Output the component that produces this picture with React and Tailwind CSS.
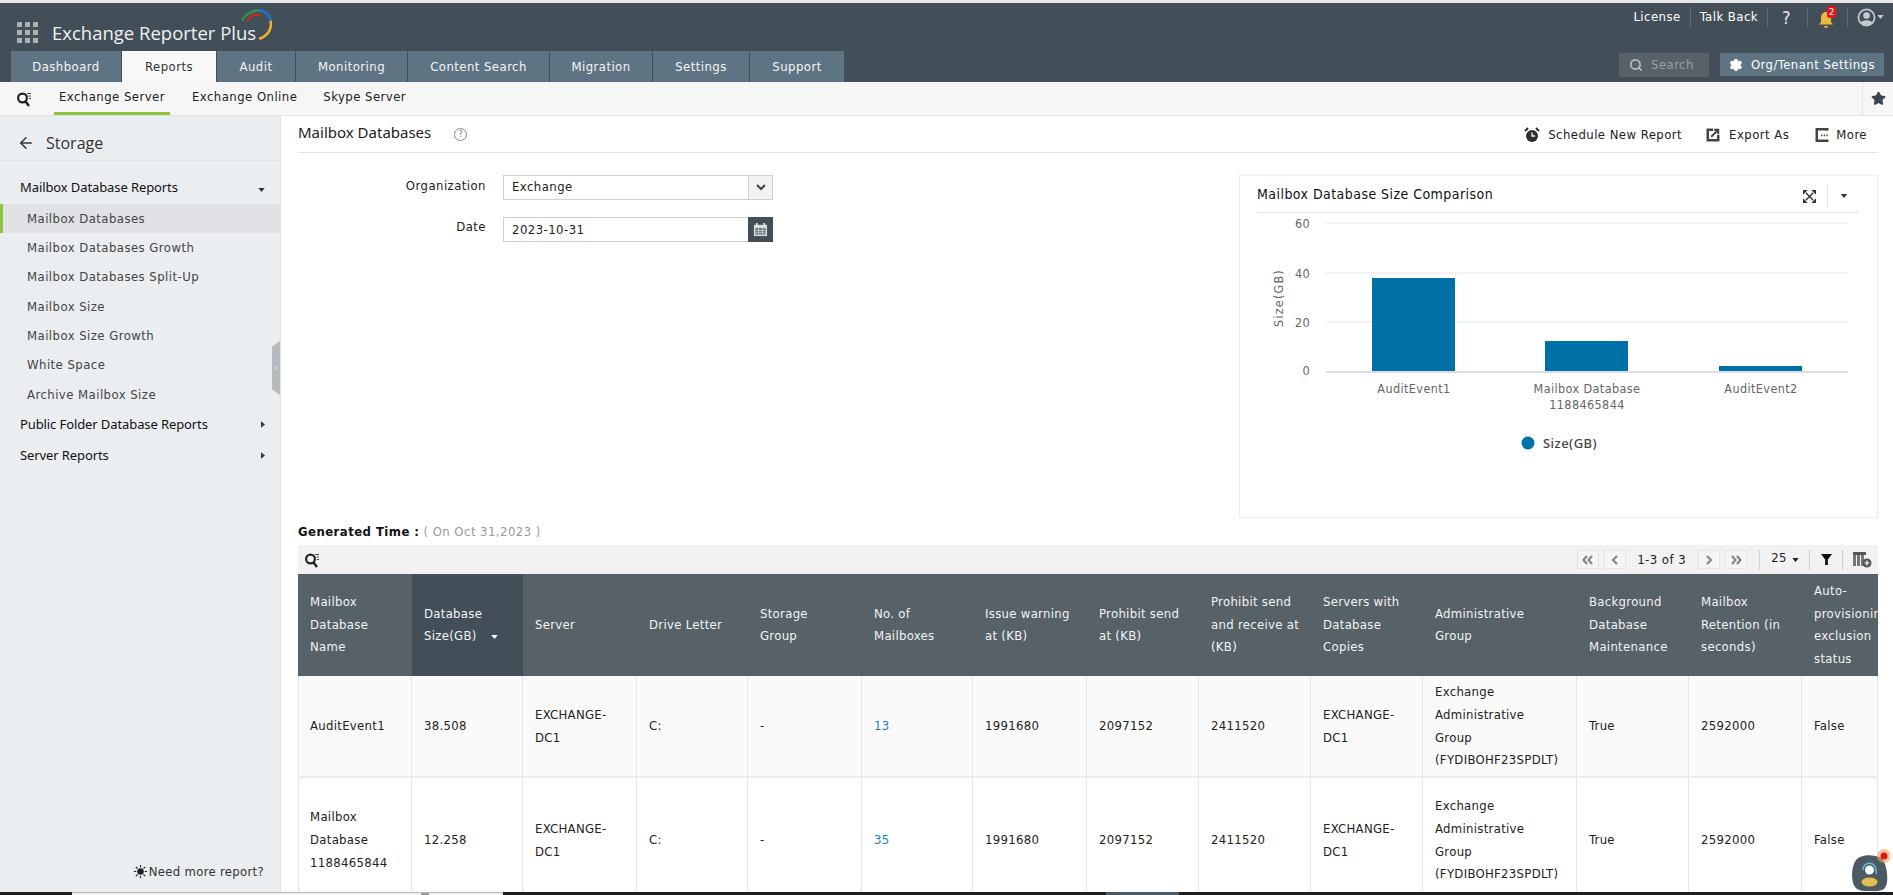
import React from "react";
import { Search, Star, ArrowLeft, Settings } from "lucide-react";

const tabs = [
  ["Dashboard", "w-[111px]"],
  ["Reports", "w-[95px]"],
  ["Audit", "w-[79px]"],
  ["Monitoring", "w-[112px]"],
  ["Content Search", "w-[142px]"],
  ["Migration", "w-[103px]"],
  ["Settings", "w-[97px]"],
  ["Support", "w-[95px]"],
];

const sideItems = ["Mailbox Databases", "Mailbox Databases Growth", "Mailbox Databases Split-Up", "Mailbox Size", "Mailbox Size Growth", "White Space", "Archive Mailbox Size"];

const cols = [
  ["Mailbox Database Name", "w-[114px]"],
  ["Database Size(GB)", "w-[111px]"],
  ["Server", "w-[114px]"],
  ["Drive Letter", "w-[111px]"],
  ["Storage Group", "w-[114px]"],
  ["No. of Mailboxes", "w-[111px]"],
  ["Issue warning at (KB)", "w-[114px]"],
  ["Prohibit send at (KB)", "w-[112px]"],
  ["Prohibit send and receive at (KB)", "w-[112px]"],
  ["Servers with Database Copies", "w-[112px]"],
  ["Administrative Group", "w-[154px]"],
  ["Background Database Maintenance", "w-[112px]"],
  ["Mailbox Retention (in seconds)", "w-[113px]"],
  ["Auto-provisioning exclusion status", "w-[76px]"],
];

const rows = [
  { name: "AuditEvent1", size: "38.508", mb: "13", h: "h-[102px]", bg: "bg-[#fafafa]" },
  { name: "Mailbox Database 1188465844", size: "12.258", mb: "35", h: "h-[126px]", bg: "bg-white" },
];

function FindIcon({ className }) {
  return (
    <svg viewBox="0 0 16 16" className={className} fill="none">
      <circle cx="6.5" cy="7" r="4.4" stroke="#222" strokeWidth="2.2" />
      <path d="M9.5 10.5L13 15" stroke="#222" strokeWidth="2.4" />
      <path d="M11 2.5h4M12.5 5h2.5M13 7.5h2" stroke="#444" strokeWidth="1" />
    </svg>
  );
}

function Logo() {
  return (
    <svg viewBox="0 0 34 32" className="w-[38px] h-[34px] -ml-[17px] -mt-[18px]" fill="none">
      <path d="M2 13C6 5 14 2 20 4" stroke="#2f8f4e" strokeWidth="2.4" />
      <path d="M6 14C9 8 15 6 20 8" stroke="#c8282d" strokeWidth="2" />
      <path d="M18 3C25 4 29 9 29 15" stroke="#1c75bc" strokeWidth="2.6" />
      <path d="M29 13C30 21 26 27 18 30" stroke="#f0b429" strokeWidth="2.4" />
    </svg>
  );
}

function Grid9() {
  return (
    <div className="grid grid-cols-3 gap-[3px] w-[21px] h-[21px]">
      {Array.from({ length: 9 }).map((_, i) => (
        <div key={i} className="bg-[#aab0b4] w-[5px] h-[5px]" />
      ))}
    </div>
  );
}

function PagerBtn({ children }) {
  return (
    <div className="w-[22px] h-[19px] border border-[#e4e4e4] bg-[#f5f5f5] flex items-center justify-center">
      <svg viewBox="0 0 12 10" className="w-[12px] h-[10px]" fill="none" stroke="#888" strokeWidth="2.2">
        {children}
      </svg>
    </div>
  );
}

function Chart() {
  return (
    <svg viewBox="1240 213 636 304" className="w-[636px] h-[304px] block">
      <style>{`.ax{font-family:'DejaVu Sans';font-stretch:condensed;font-size:12.5px;fill:#666;letter-spacing:.4px}`}</style>
      {[[223, "60"], [273, "40"], [322, "20"]].map(([y, t]) => (
        <g key={t}>
          <line x1="1326" x2="1848" y1={y} y2={y} stroke="#e6e6e6" />
          <text x="1310" y={y + 5} textAnchor="end" className="ax">{t}</text>
        </g>
      ))}
      <text x="1310" y="375" textAnchor="end" className="ax">0</text>
      <text transform="translate(1283 298) rotate(-90)" textAnchor="middle" className="ax" style={{ letterSpacing: "1.2px" }}>Size(GB)</text>
      <rect x="1372" y="278" width="83" height="93" fill="#0071a7" />
      <rect x="1545" y="341" width="83" height="30" fill="#0071a7" />
      <rect x="1719" y="366" width="83" height="5" fill="#0071a7" />
      <rect x="1326" y="371" width="522" height="2" fill="#dcdfe3" />
      <text x="1414" y="393" textAnchor="middle" className="ax">AuditEvent1</text>
      <text x="1587" y="393" textAnchor="middle" className="ax">Mailbox Database</text>
      <text x="1587" y="409" textAnchor="middle" className="ax">1188465844</text>
      <text x="1761" y="393" textAnchor="middle" className="ax">AuditEvent2</text>
      <ellipse cx="1528" cy="443" rx="6.5" ry="6.5" fill="#0071a7" />
      <text x="1543" y="448" style={{ fontFamily: "'Noto Sans'", fontSize: 13, fontWeight: 500, fill: "#444" }}>Size(GB)</text>
    </svg>
  );
}

export default function App() {
  return (
    <div className="w-[1893px] h-[895px] overflow-hidden flex flex-col bg-white text-[13px] text-[#222] tracking-[0.45px] font-['DejaVu_Sans',sans-serif] [font-stretch:condensed] relative">
      <div className="h-[3px] bg-[#e6e6e6] shrink-0" />
      {/* header */}
      <div className="h-[79px] bg-[#434f58] shrink-0 flex justify-between">
        <div className="flex flex-col justify-between pl-[11px]">
          <div className="flex items-center pl-[6px] pt-[19px]">
            <Grid9 />
            <span className="ml-[14px] text-[18.500px] leading-[20px] tracking-normal text-[#f0f1f2] font-['Open_Sans',sans-serif] [font-stretch:normal]">Exchange Reporter Plus</span>
            <Logo />
          </div>
          <div className="flex h-[32px] -mb-[1px]">
            {tabs.map(([t, w], i) => (
              <div key={t} className={`${w} h-full flex items-center justify-center border-r border-[#434f58] ${i === 1 ? "bg-[#f8f8f8] text-[#333]" : "bg-[#5f7482] text-[#f4f5f6]"}`}>{t}</div>
            ))}
          </div>
        </div>
        <div className="flex flex-col justify-between pr-[9px] items-end">
          <div className="flex items-center h-[20px] mt-[4px] text-white">
            <span>License</span>
            <div className="w-px h-[20px] bg-[#5f6c75] ml-[9px] mr-[9px]" />
            <span>Talk Back</span>
            <div className="w-px h-[20px] bg-[#5f6c75] ml-[9px] mr-[14px]" />
            <span className="text-[18px] text-[#e4e6e8] w-[12px]">?</span>
            <div className="w-px h-[20px] bg-[#5f6c75] ml-[13px] mr-[10px]" />
            <div className="relative w-[18px] h-[20px]">
              <svg viewBox="0 0 16 18" className="w-[16px] h-[18px] mt-[4px]"><path d="M8 1c3 0 5 2.500 5 6v4l2 2.500H1L3 11V7c0-3.500 2-6 5-6z" fill="#eeb63c" /><path d="M6 15h4a2 2 0 0 1-4 0z" fill="#eeb63c" /></svg>
              <span className="absolute -top-[1px] left-[9px] w-[9px] h-[12px] rounded-[3px] bg-[#e8141c] text-white text-[9px] leading-[12px] text-center tracking-normal">2</span>
            </div>
            <div className="w-px h-[20px] bg-[#5f6c75] ml-[11px] mr-[9px]" />
            <svg viewBox="0 0 20 20" className="w-[19px] h-[19px]"><circle cx="10" cy="10" r="8.5" fill="none" stroke="#c5cacd" strokeWidth="1.800" /><circle cx="10" cy="8" r="3.500" fill="#c5cacd" /><path d="M4 16c1-4 11-4 12 0l-3 2.500H7z" fill="#c5cacd" /></svg>
            <svg viewBox="0 0 8 5" className="w-[7px] h-[4px] ml-[1px]"><path d="M0 0h8L4 5z" fill="#c5cacd" /></svg>
          </div>
          <div className="flex items-start gap-[11px] mb-[5px]">
            <div className="w-[90px] h-[24px] bg-[#566168] flex items-center px-[10px] gap-[8px] text-[#98a2a8]">
              <Search size={14} strokeWidth={3} color="#b5bcc1" />
              <span>Search</span>
            </div>
            <div className="w-[164px] h-[23px] bg-[#5f7482] flex items-center px-[9px] gap-[8px] text-white whitespace-nowrap">
              <Settings size={14} fill="#fff" color="#fff" />
              <span>Org/Tenant Settings</span>
            </div>
          </div>
        </div>
      </div>
      {/* sub nav */}
      <div className="h-[34px] bg-[#f6f6f6] border-b border-[#e3e3e3] shrink-0 flex items-stretch">
        <div className="w-[54px] flex items-center pl-[16px]"><FindIcon className="w-[16px] h-[16px]" /></div>
        <div className="w-[116px] flex items-center justify-center border-b-[3px] border-[#8cc63f] h-[33px]">Exchange Server</div>
        <div className="ml-[22px] flex items-center pb-[3px]">Exchange Online</div>
        <div className="ml-[26px] flex items-center pb-[3px]">Skype Server</div>
        <div className="ml-auto w-[31px] border-l border-[#e3e3e3] flex items-center justify-center"><Star size={15} fill="#3c4650" color="#3c4650" /></div>
      </div>
      {/* body */}
      <div className="flex flex-1 min-h-0">
        <aside className="w-[281px] shrink-0 bg-[#ebeef0] border-r border-[#e2e4e6] flex flex-col relative">
          <div className="h-[45px] border-b border-[#e0e3e5] flex items-center pl-[17px] gap-[11px] shrink-0 pt-[9px] text-[16px] tracking-normal font-['Open_Sans',sans-serif] [font-stretch:normal] text-[#333]">
            <ArrowLeft size={18} color="#333" />
            <span>Storage</span>
          </div>
          <div className="h-[43px] pt-[10px] flex items-center pl-[20px] pr-[15px] justify-between text-[13px] tracking-[-0.1px] text-[#111] font-['Noto_Sans',sans-serif] [font-stretch:normal] shrink-0">
            <span>Mailbox Database Reports</span>
            <svg viewBox="0 0 8 5" className="w-[7px] h-[4px] mt-[4px]"><path d="M0 0h8L4 5z" fill="#333" /></svg>
          </div>
          {sideItems.map((s, i) => (
            <div key={s} className={`h-[29.300px] flex items-center pl-[27px] shrink-0 text-[#444] ${i === 0 ? "bg-[#e0e2e6] border-l-[3px] border-[#8cc63f] !pl-[24px]" : ""}`}>{s}</div>
          ))}
          {["Public Folder Database Reports", "Server Reports"].map((s) => (
            <div key={s} className="h-[31px] flex items-center pl-[20px] pr-[15px] justify-between text-[13px] tracking-[-0.1px] text-[#111] font-['Noto_Sans',sans-serif] [font-stretch:normal] shrink-0">
              <span>{s}</span>
              <svg viewBox="0 0 5 8" className="w-[4px] h-[7px]"><path d="M0 0l5 4-5 4z" fill="#333" /></svg>
            </div>
          ))}
          <div className="mt-auto mb-[11px] pr-[16px] flex items-center justify-end gap-[1px] text-[#333]">
            <svg viewBox="0 0 16 16" className="w-[15px] h-[15px]"><circle cx="8" cy="8" r="3.500" fill="#222" /><path d="M8 1v2.500M8 12.500V15M1 8h2.500M12.500 8H15M3 3l1.800 1.800M11.200 11.200L13 13M13 3l-1.800 1.800M4.800 11.200L3 13" stroke="#222" strokeWidth="1.200" /></svg>
            <span className="tracking-[0.3px]">Need more report?</span>
          </div>
          <div className="absolute right-0 top-[225px] w-[8px] h-[54px] bg-[#b5bbbf] [clip-path:polygon(0_10%,100%_0,100%_100%,0_90%)] flex items-center justify-center text-white text-[7px]">‹</div>
        </aside>
        <main className="flex-1 min-w-0 pl-[17px] pr-[15px] flex flex-col overflow-hidden">
          <div className="h-[37px] border-b border-[#e3e3e3] flex items-center shrink-0 pt-[2px]">
            <span className="-mt-[5px] text-[15px] tracking-normal text-[#222] font-['Noto_Sans',sans-serif] [font-stretch:normal]">Mailbox Databases</span>
            <span className="-mt-[2px] ml-[23px] w-[13px] h-[13px] rounded-full border border-[#888] text-[9px] leading-[11px] text-center text-[#777] tracking-normal">?</span>
            <div className="ml-auto flex items-center pr-[11px]">
              <svg viewBox="0 0 16 16" className="w-[16px] h-[16px]"><circle cx="8" cy="9" r="6" fill="#2f2f2f" /><path d="M8 5.500V9h3" stroke="#fff" strokeWidth="1.300" fill="none" /><path d="M1 4l3-3M15 4l-3-3" stroke="#2f2f2f" strokeWidth="2" /></svg>
              <span className="ml-[8px]">Schedule New Report</span>
              <svg viewBox="0 0 16 16" className="w-[14px] h-[14px] ml-[24px]" fill="none"><path d="M8 2H2v12h12V8" stroke="#444" strokeWidth="2.800" /><path d="M6 10L13 3M9 2h5v5" stroke="#444" strokeWidth="2.200" /></svg>
              <span className="ml-[9px]">Export As</span>
              <svg viewBox="0 0 16 16" className="w-[14px] h-[14px] ml-[26px]" fill="none"><path d="M14 3V1.500H2v13h12V13" stroke="#444" strokeWidth="2.800" /><path d="M7 8.500h1.500M10 8.500h1.500M13 8.500h1.500" stroke="#444" strokeWidth="2" /></svg>
              <span className="ml-[7px]">More</span>
            </div>
          </div>
          <div className="flex justify-between items-start shrink-0 pt-[22px] h-[366px]">
            <div className="flex flex-col gap-[17px] w-[476px]">
              <div className="flex items-center">
                <label className="w-[205px] text-right pr-[17px] -mt-[4px]">Organization</label>
                <div className="w-[270px] h-[25px] border border-[#cfcfcf] flex items-center justify-between pl-[8px]">
                  <span className="-mt-[1px]">Exchange</span>
                  <div className="w-[24px] h-full border-l border-[#cfcfcf] bg-[#f2f2f2] flex items-center justify-center">
                    <svg viewBox="0 0 10 7" className="w-[10px] h-[7px]" fill="none"><path d="M1 1l4 4 4-4" stroke="#444" strokeWidth="2" /></svg>
                  </div>
                </div>
              </div>
              <div className="flex items-center">
                <label className="w-[205px] text-right pr-[17px] -mt-[6px]">Date</label>
                <div className="w-[270px] h-[25px] border border-[#cfcfcf] flex items-center justify-between pl-[8px]">
                  <span>2023-10-31</span>
                  <div className="w-[25px] h-[25px] -mr-px bg-[#434f58] flex items-center justify-center">
                    <svg viewBox="0 0 16 16" className="w-[15px] h-[15px]"><rect x="1" y="3" width="14" height="12" fill="#d9dcde" /><rect x="2.500" y="6.500" width="11" height="7" fill="#6d7880" /><path d="M4 1v3M12 1v3" stroke="#fff" strokeWidth="1.500" /><path d="M2.500 9h11M2.500 11.500h11M6 6.500v7M10 6.500v7" stroke="#d9dcde" strokeWidth=".7" /></svg>
                  </div>
                </div>
              </div>
            </div>
            <div className="w-[639px] h-[343px] border border-[#ececec] shrink-0">
              <div className="mx-[18px] h-[37px] border-b border-[#e3e3e3] flex items-center justify-between">
                <span className="mt-[1px] -ml-[1px] text-[14px] tracking-[0.45px] text-[#111]">Mailbox Database Size Comparison</span>
                <div className="flex items-center h-full pt-[4px]">
                  <svg viewBox="0 0 14 14" className="w-[13px] h-[13px]" fill="none"><path d="M3 3l8 8M11 3l-8 8" stroke="#333" strokeWidth="1.500" /><path d="M0 0h5L0 5zM14 0v5L9 0zM0 14v-5l5 5zM14 14H9l5-5z" fill="#333" /></svg>
                  <div className="w-px h-[24px] bg-[#e6e6e6] ml-[11px] mr-[12px]" />
                  <svg viewBox="0 0 8 5" className="w-[8px] h-[4px] mr-[11px]"><path d="M0 0h8L4 5z" fill="#333" /></svg>
                </div>
              </div>
              <Chart />
            </div>
          </div>
          <div className="h-[26px] shrink-0 flex items-center whitespace-pre">
            <span className="font-bold text-[#111]">Generated Time :</span>
            <span className="ml-[4px] text-[#999]">( On Oct 31,2023 )</span>
          </div>
          <div className="h-[29px] shrink-0 bg-[#f2f2f2] flex items-center pl-[6px] pr-[6px]">
            <FindIcon className="w-[16px] h-[16px]" />
            <div className="ml-auto flex items-center">
              <PagerBtn><path d="M5 1L1.500 5 5 9M10 1L6.500 5 10 9" /></PagerBtn>
              <div className="ml-[5px]"><PagerBtn><path d="M8 1L4 5l4 4" /></PagerBtn></div>
              <span className="ml-[11px] w-[49px] whitespace-nowrap">1-3 of 3</span>
              <div className="ml-[12px]"><PagerBtn><path d="M4 1l4 4-4 4" /></PagerBtn></div>
              <div className="ml-[5px]"><PagerBtn><path d="M2 1l3.500 4L2 9M7 1l3.500 4L7 9" /></PagerBtn></div>
              <div className="w-px h-[20px] bg-[#d0d0d0] ml-[12px]" />
              <span className="ml-[11px] -mt-[3px]">25</span>
              <svg viewBox="0 0 8 5" className="w-[7px] h-[4px] ml-[5px]"><path d="M0 0h8L4 5z" fill="#222" /></svg>
              <div className="w-px h-[20px] bg-[#d0d0d0] ml-[10px]" />
              <svg viewBox="0 0 12 12" className="w-[11px] h-[11px] ml-[11px]"><path d="M0 0h12L7.500 6v6h-3V6z" fill="#111" /></svg>
              <div className="w-px h-[20px] bg-[#d0d0d0] ml-[10px]" />
              <svg viewBox="0 0 20 17" className="w-[20px] h-[17px] ml-[9px]"><path d="M1 1h13v3H1z" fill="#555" /><path d="M1 4h3v11H1zM5 4h3v11H5zM9 4h3v11H9z" fill="#777" /><circle cx="15" cy="12" r="4.500" fill="#555" /><path d="M15 9.500v5M12.500 12h5" stroke="#fff" strokeWidth="1.200" /></svg>
            </div>
          </div>
          <table className="table-fixed border-separate border-spacing-0 w-[1580px] shrink-0 tracking-[0.3px]">
            <thead>
              <tr className="h-[102px] bg-[#566168] text-[#f2f3f4]">
                {cols.map(([t, w], i) => (
                  <th key={t} className={`${w} font-normal text-left align-middle pl-[12px] leading-[22.500px] overflow-hidden ${i === 13 ? "pr-0" : "pr-[8px]"} ${i === 1 ? "bg-[#434f58]" : ""}`}>
                    {i === 13 ? (
                      <span className="block whitespace-nowrap">Auto-<br />provisioning<br />exclusion<br />status</span>
                    ) : i === 4 || i === 10 ? (
                      <span className="block w-min">{t}</span>
                    ) : t}
                    {i === 1 && <svg viewBox="0 0 8 5" className="inline w-[7px] h-[4px] ml-[14px] align-middle"><path d="M0 0h8L4 5z" fill="#fff" /></svg>}
                  </th>
                ))}
              </tr>
            </thead>
            <tbody>
              {rows.map((r) => (
                <tr key={r.name} className={`${r.h} ${r.bg}`}>
                  {[r.name, r.size, "EXCHANGE-DC1", "C:", "-", r.mb, "1991680", "2097152", "2411520", "EXCHANGE-DC1", "Exchange Administrative Group (FYDIBOHF23SPDLT)", "True", "2592000", "False"].map((v, i) => (
                    <td key={i} className={`align-middle pl-[12px] pr-[2px] pt-[1px] leading-[22.700px] border-r border-b-2 border-b-[#ececec] border-r-[#e6e6e6] first:border-l first:border-l-[#e6e6e6] first:pl-[11px] ${i === 5 ? "text-[#1a7fc1]" : "text-[#222]"}`}>
                      {i === 10 || i === 0 || i === 2 || i === 9 ? <span className="block w-min">{v}</span> : v}
                    </td>
                  ))}
                </tr>
              ))}
            </tbody>
          </table>
        </main>
      </div>
      {/* bottom scroll strip */}
      <div className="h-[3px] shrink-0 bg-[#1e1e1e] flex">
        <div className="ml-[72px] w-[431px] bg-[#f2f2f2] border-t border-[#b9b9b9] flex justify-center">
          <div className="w-[8px] h-[2px] bg-[#9a9a9a] ml-[274px]" />
        </div>
        <div className="ml-[603px] w-[73px] bg-[#4b5a66]" />
      </div>
      {/* floating assistant */}
      <div className="absolute left-[1850px] top-[848px] w-[40px] h-[44px]">
        <svg viewBox="0 0 40 44" className="w-[40px] h-[44px]">
          <path d="M6 12c5-6 18-6 25-2 5 4 7 16 6 24-1 7-4 9-12 9-7 0-16 1-20-4C1 33 1 19 6 12z" fill="#4b5a63" />
          <circle cx="34" cy="8" r="7" fill="#e9a062" opacity=".6" />
          <circle cx="34" cy="8" r="3.500" fill="#e8141c" />
          <path d="M13 22c0-9 13-9 13 0v4" stroke="#5cc0e8" strokeWidth="1.500" fill="none" />
          <circle cx="19.500" cy="22" r="4.500" fill="#fff" />
          <ellipse cx="19.500" cy="34" rx="8" ry="4.500" fill="#e6bd54" />
        </svg>
      </div>
    </div>
  );
}
